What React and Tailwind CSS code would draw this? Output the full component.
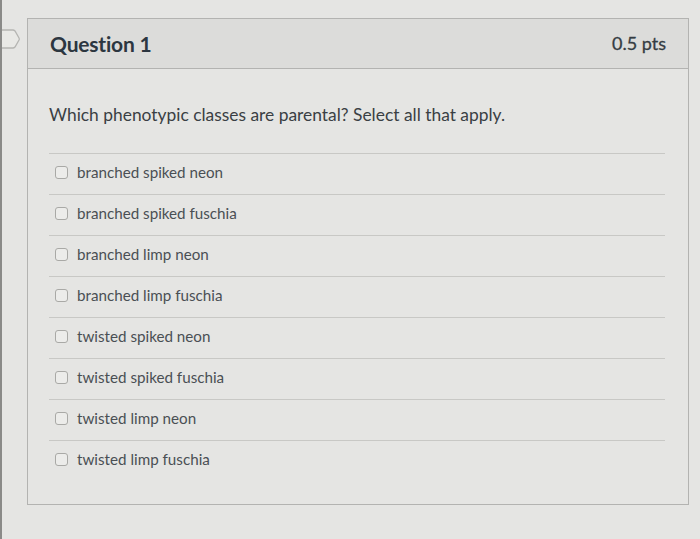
export default function App() {
  const options = [
    "branched spiked neon",
    "branched spiked fuschia",
    "branched limp neon",
    "branched limp fuschia",
    "twisted spiked neon",
    "twisted spiked fuschia",
    "twisted limp neon",
    "twisted limp fuschia",
  ];
  return (
    <div
      className="w-[700px] h-[539px] bg-[#e5e5e3] flex overflow-hidden"
      style={{ fontFamily: "Lato, 'Open Sans', sans-serif" }}
    >
      <div className="w-[2px] h-full bg-[#8a8a88]" />
      <div className="w-[25px] pt-[29px]">
        <svg width="18" height="20" viewBox="0 0 18 20">
          <path d="M-2 1 H11 Q12 1 13 2 L17 9 Q17.5 10 17 11 L13 18 Q12 19 11 19 H-2" fill="#e9e9e6" stroke="#b5b5b2" strokeWidth="1.3" />
        </svg>
      </div>
      <div className="mt-[18px] w-[662px] h-[487px] border border-[#b3b3b1] flex flex-col">
        <div className="h-[50px] bg-[#dcdcda] border-b border-[#b3b3b1] flex items-center justify-between pl-[22px] pr-[22px]">
          <span className="text-[21px] font-bold text-[#2c3640] tracking-[-0.2px]">Question 1</span>
          <span className="text-[18px] text-[#353c43] [-webkit-text-stroke:0.3px_#353c43]">0.5 pts</span>
        </div>
        <div className="px-[21px] pr-[23px] flex flex-col">
          <div className="mt-[36px] mb-[28px] h-[20px] leading-[20px] text-[17.4px] text-[#3a3f44]">
            Which phenotypic classes are parental? Select all that apply.
          </div>
          {options.map((o) => (
            <div key={o} className="h-[41px] border-t border-[#c8c8c5] flex items-center pb-[3px]">
              <div className="ml-[6px] w-[13px] h-[13px] border border-[#a9a9a6] rounded-[3px] bg-[#ececea]" />
              <span className="ml-[9px] text-[15.2px] text-[#4a4f54]">{o}</span>
            </div>
          ))}
        </div>
      </div>
    </div>
  );
}
